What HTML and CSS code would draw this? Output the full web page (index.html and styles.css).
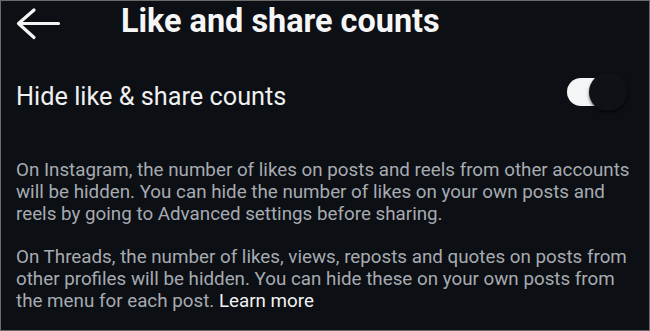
FILE: index.html
```html
<!DOCTYPE html>
<html lang="en">
<head>
<meta charset="utf-8">
<title>Like and share counts</title>
<link rel="stylesheet" href="styles.css">
</head>
<body>
<div class="screen">
  <header class="header">
    <svg class="back" viewBox="0 0 60 42" width="60" height="42" aria-hidden="true">
      <path d="M17.5 22.5 H57.5 M17.5 22.5 L33 9 M17.5 22.5 L33 36.5" fill="none" stroke="#f4f4f4" stroke-width="3.2" stroke-linecap="round" stroke-linejoin="round"/>
    </svg>
    <h1 class="title">Like and share counts</h1>
  </header>
  <div class="setting">
    <span class="setting-label">Hide like &amp; share counts</span>
    <span class="toggle"><span class="toggle-track"></span><span class="toggle-thumb"></span></span>
  </div>
  <p class="info">On Instagram, the number of likes on posts and reels from other accounts will be hidden. You can hide the number of likes on your own posts and reels by going to Advanced settings before sharing.</p>
  <p class="info info-second">On Threads, the number of likes, views, reposts and quotes on posts from other profiles will be hidden. You can hide these on your own posts from the menu for each post. <a class="learn" href="#">Learn more</a></p>
</div>
</body>
</html>
```

FILE: styles.css
```css
html, body {
  margin: 0;
  padding: 0;
  background: #0c0f14;
}
.screen {
  width: 650px;
  height: 331px;
  box-sizing: border-box;
  border: 1px solid #6a6a6a;
  background: #0c0f14;
  font-family: Roboto, "Noto Sans", sans-serif;
  overflow: hidden;
}
.header {
  display: flex;
  align-items: flex-start;
  height: 42px;
}
.back {
  display: block;
  flex: none;
}
.title {
  margin: 2px 0 0 60px;
  font-size: 32.4px;
  line-height: 36px;
  font-weight: 700;
  color: #f6f6f6;
  white-space: nowrap;
}
.setting {
  display: flex;
  justify-content: space-between;
  align-items: center;
  height: 40px;
  margin-top: 29px;
  padding: 0 22px 0 15px;
}
.setting-label {
  align-self: flex-start;
  margin-top: 11px;
  font-size: 25.3px;
  line-height: 28px;
  color: #f0f0f0;
}
.toggle {
  position: relative;
  width: 60px;
  height: 38px;
  flex: none;
}
.toggle-track {
  position: absolute;
  left: 0;
  top: 5px;
  width: 54px;
  height: 28px;
  border-radius: 14px;
  background: #f4f5f7;
}
.toggle-thumb {
  position: absolute;
  left: 22px;
  top: 0;
  width: 38px;
  height: 38px;
  border-radius: 50%;
  background: #0e1116;
  box-shadow: 0 2px 3px rgba(0, 0, 0, 0.6);
}
.info {
  margin: 47px 0 0;
  padding: 0 12px 0 15px;
  font-size: 18.8px;
  line-height: 22px;
  color: #a7abb1;
}
.info-second {
  margin-top: 21px;
}
.learn {
  color: #f2f2f2;
  text-decoration: none;
}
```
